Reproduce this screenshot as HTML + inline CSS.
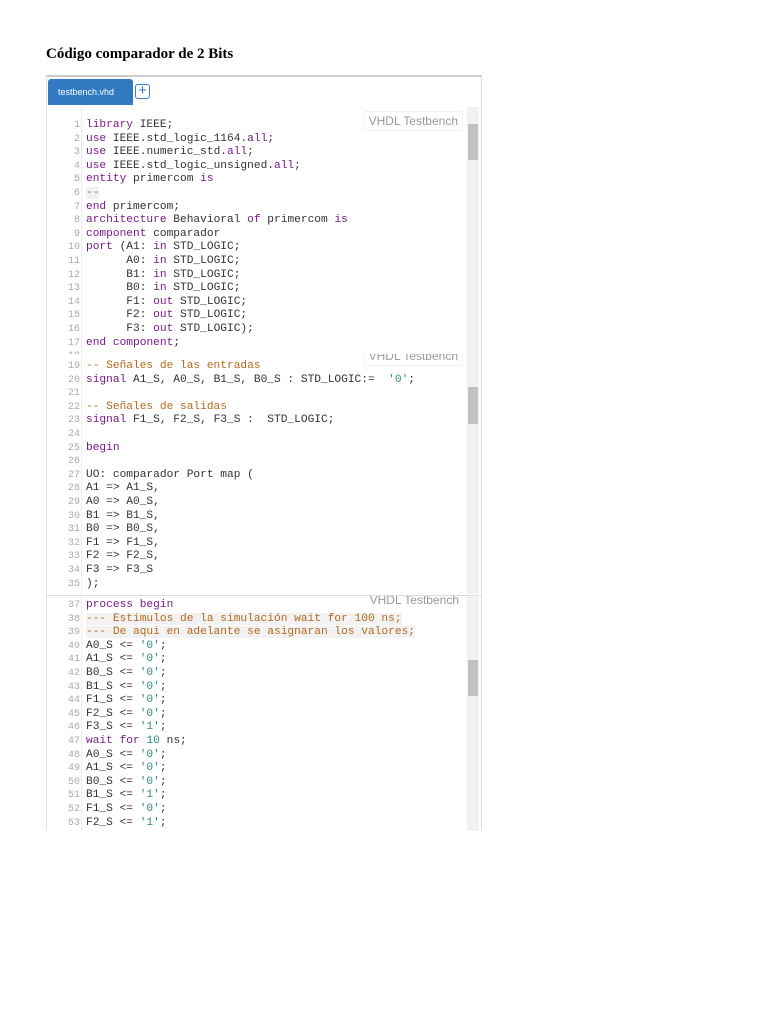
<!DOCTYPE html>
<html><head><meta charset="utf-8"><style>
body{margin:0;width:768px;height:1024px;background:#fff;position:relative;overflow:hidden;font-family:"Liberation Sans",sans-serif}
h1{position:absolute;left:46px;top:46px;margin:0;font:bold 15px "Liberation Serif",serif;color:#000}
.panel{position:absolute;left:46px;top:75px;width:434px;height:753px;border-top:2px solid #ccc;border-right:1px solid #ddd;border-left:1px solid #e4e4e4;background:#fff}
.tabbar{position:absolute;left:0;top:0;width:434px;height:30px;background:#fff}
.tab{position:absolute;left:1px;top:2px;width:85px;height:26px;background:#3179c0;border-radius:3px 3px 0 0;color:#fff;font-size:9px;line-height:26px;padding-left:10px;box-sizing:border-box}
.plus{position:absolute;left:88px;top:7px;width:15px;height:15px;border:1.5px solid #3a7fc2;border-radius:3px;color:#3a7fc2;font-size:15px;line-height:12px;text-align:center;box-sizing:border-box}
.seg{position:absolute;left:0;width:434px;overflow:hidden;background:#fff}
.track{position:absolute;right:2px;top:0;bottom:0;width:12px;background:#f1f1f1}
.thumb{position:absolute;left:1px;width:10px;background:#c1c1c1}
.gut{position:absolute;left:34px;top:0;bottom:0;border-left:1px solid #eee}
.lbl{position:absolute;right:18px;top:4px;font-size:12px;color:#999;background:#fff;padding:2px 4px;border:1px solid #f2f2f2}
.l{position:absolute;left:0;height:13.6px;line-height:13.6px;font:11.2px "Liberation Mono",monospace;color:#333;white-space:pre}
.l i{font-style:normal;display:inline-block;width:33px;text-align:right;color:#aaa;font-size:10px;margin-right:6px}
.k{color:#7a1a8a}.c{color:#b46a1e}.s{color:#2e8b80}
.hl{background:#f2f2f2}
</style></head><body>
<h1>Código comparador de 2 Bits</h1>
<div class="panel">
<div class="tabbar"><div class="tab">testbench.vhd</div><div class="plus">+</div></div>

<div class="seg" style="top:30px;height:247px">
<div class="gut"></div>
<div class="track"><div class="thumb" style="top:17px;height:36px"></div></div>
<div class="lbl">VHDL Testbench</div>
<div style="position:absolute;left:0;top:12px">
<div class="l" style="top:0"><i>1</i><span class="k">library</span> IEEE;</div>
<div class="l" style="top:13.6px"><i>2</i><span class="k">use</span> IEEE.std_logic_1164.<span class="k">all</span>;</div>
<div class="l" style="top:27.2px"><i>3</i><span class="k">use</span> IEEE.numeric_std.<span class="k">all</span>;</div>
<div class="l" style="top:40.8px"><i>4</i><span class="k">use</span> IEEE.std_logic_unsigned.<span class="k">all</span>;</div>
<div class="l" style="top:54.4px"><i>5</i><span class="k">entity</span> primercom <span class="k">is</span></div>
<div class="l" style="top:68px"><i>6</i><span class="c hl">--</span></div>
<div class="l" style="top:81.6px"><i>7</i><span class="k">end</span> primercom;</div>
<div class="l" style="top:95.2px"><i>8</i><span class="k">architecture</span> Behavioral <span class="k">of</span> primercom <span class="k">is</span></div>
<div class="l" style="top:108.8px"><i>9</i><span class="k">component</span> comparador</div>
<div class="l" style="top:122.4px"><i>10</i><span class="k">port</span> (A1: <span class="k">in</span> STD_LOGIC;</div>
<div class="l" style="top:136px"><i>11</i>      A0: <span class="k">in</span> STD_LOGIC;</div>
<div class="l" style="top:149.6px"><i>12</i>      B1: <span class="k">in</span> STD_LOGIC;</div>
<div class="l" style="top:163.2px"><i>13</i>      B0: <span class="k">in</span> STD_LOGIC;</div>
<div class="l" style="top:176.8px"><i>14</i>      F1: <span class="k">out</span> STD_LOGIC;</div>
<div class="l" style="top:190.4px"><i>15</i>      F2: <span class="k">out</span> STD_LOGIC;</div>
<div class="l" style="top:204px"><i>16</i>      F3: <span class="k">out</span> STD_LOGIC);</div>
<div class="l" style="top:217.6px"><i>17</i><span class="k">end</span> <span class="k">component</span>;</div>
<div class="l" style="top:231.2px"><i>18</i></div>
</div></div>

<div class="seg" style="top:277px;height:240px">
<div class="gut"></div>
<div class="track"><div class="thumb" style="top:33px;height:37px"></div></div>
<div class="lbl" style="top:-8px">VHDL Testbench</div>
<div style="position:absolute;left:0;top:6px">
<div class="l" style="top:0"><i>19</i><span class="c">-- Señales de las entradas</span></div>
<div class="l" style="top:13.6px"><i>20</i><span class="k">signal</span> A1_S, A0_S, B1_S, B0_S : STD_LOGIC:=  <span class="s">'0'</span>;</div>
<div class="l" style="top:27.2px"><i>21</i></div>
<div class="l" style="top:40.8px"><i>22</i><span class="c">-- Señales de salidas</span></div>
<div class="l" style="top:54.4px"><i>23</i><span class="k">signal</span> F1_S, F2_S, F3_S :  STD_LOGIC;</div>
<div class="l" style="top:68px"><i>24</i></div>
<div class="l" style="top:81.6px"><i>25</i><span class="k">begin</span></div>
<div class="l" style="top:95.2px"><i>26</i></div>
<div class="l" style="top:108.8px"><i>27</i>UO: comparador Port map (</div>
<div class="l" style="top:122.4px"><i>28</i>A1 =&gt; A1_S,</div>
<div class="l" style="top:136px"><i>29</i>A0 =&gt; A0_S,</div>
<div class="l" style="top:149.6px"><i>30</i>B1 =&gt; B1_S,</div>
<div class="l" style="top:163.2px"><i>31</i>B0 =&gt; B0_S,</div>
<div class="l" style="top:176.8px"><i>32</i>F1 =&gt; F1_S,</div>
<div class="l" style="top:190.4px"><i>33</i>F2 =&gt; F2_S,</div>
<div class="l" style="top:204px"><i>34</i>F3 =&gt; F3_S</div>
<div class="l" style="top:217.6px"><i>35</i>);</div>
</div></div>

<div class="seg" style="top:518px;height:235px;border-top:1px solid #ddd">
<div class="gut"></div>
<div class="track"><div class="thumb" style="top:64px;height:36px"></div></div>
<div class="lbl" style="top:-5px;border:none">VHDL Testbench</div>
<div style="position:absolute;left:0;top:3px">
<div class="l" style="top:0"><i>37</i><span class="k">process</span> <span class="k">begin</span></div>
<div class="l" style="top:13.6px"><i>38</i><span class="c hl">--- Estimulos de la simulación wait for 100 ns;</span></div>
<div class="l" style="top:27.2px"><i>39</i><span class="c hl">--- De aqui en adelante se asignaran los valores;</span></div>
<div class="l" style="top:40.8px"><i>40</i>A0_S &lt;= <span class="s">'0'</span>;</div>
<div class="l" style="top:54.4px"><i>41</i>A1_S &lt;= <span class="s">'0'</span>;</div>
<div class="l" style="top:68px"><i>42</i>B0_S &lt;= <span class="s">'0'</span>;</div>
<div class="l" style="top:81.6px"><i>43</i>B1_S &lt;= <span class="s">'0'</span>;</div>
<div class="l" style="top:95.2px"><i>44</i>F1_S &lt;= <span class="s">'0'</span>;</div>
<div class="l" style="top:108.8px"><i>45</i>F2_S &lt;= <span class="s">'0'</span>;</div>
<div class="l" style="top:122.4px"><i>46</i>F3_S &lt;= <span class="s">'1'</span>;</div>
<div class="l" style="top:136px"><i>47</i><span class="k">wait</span> <span class="k">for</span> <span class="s">10</span> ns;</div>
<div class="l" style="top:149.6px"><i>48</i>A0_S &lt;= <span class="s">'0'</span>;</div>
<div class="l" style="top:163.2px"><i>49</i>A1_S &lt;= <span class="s">'0'</span>;</div>
<div class="l" style="top:176.8px"><i>50</i>B0_S &lt;= <span class="s">'0'</span>;</div>
<div class="l" style="top:190.4px"><i>51</i>B1_S &lt;= <span class="s">'1'</span>;</div>
<div class="l" style="top:204px"><i>52</i>F1_S &lt;= <span class="s">'0'</span>;</div>
<div class="l" style="top:217.6px"><i>53</i>F2_S &lt;= <span class="s">'1'</span>;</div>
</div></div>
</div>
</body></html>
